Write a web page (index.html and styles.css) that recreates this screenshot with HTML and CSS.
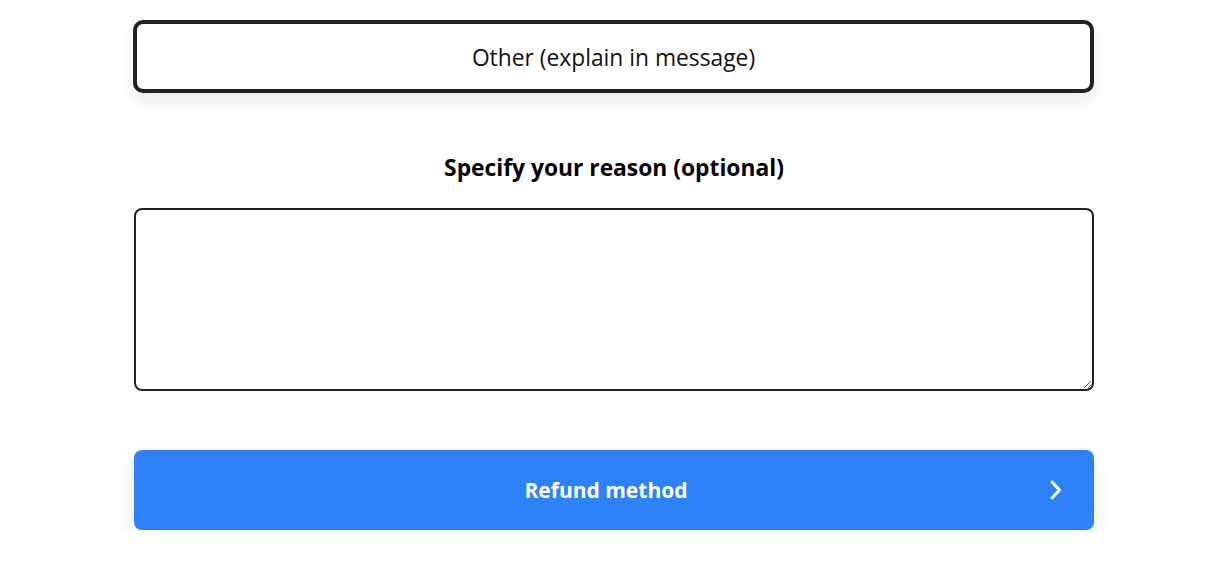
FILE: index.html
```html
<!DOCTYPE html>
<html lang="en">
<head>
<meta charset="utf-8">
<title>Refund reason</title>
<link rel="stylesheet" href="styles.css">
</head>
<body>
<main class="form">
  <div class="option">Other (explain in message)</div>
  <label class="label" for="reason">Specify your reason (optional)</label>
  <textarea class="reason" id="reason"></textarea>
  <button class="next" type="button">
    <span class="next-text">Refund method</span>
    <svg class="chevron" width="14" height="22" viewBox="0 0 14 22" aria-hidden="true"><path d="M3 3 L10.5 11 L3 19" fill="none" stroke="#fff" stroke-width="3" stroke-linecap="round" stroke-linejoin="round"/></svg>
  </button>
</main>
</body>
</html>
```
FILE: styles.css
```css
html, body {
  margin: 0;
  padding: 0;
  background: #fff;
}
body {
  font-family: "Open Sans", Lato, sans-serif;
  color: #111;
}
.form {
  width: 960px;
  margin: 0 auto;
  padding-top: 20px;
  display: flex;
  flex-direction: column;
}
.option {
  box-sizing: border-box;
  margin-left: -1px;
  width: 961px;
  height: 73px;
  border: 4px solid #222;
  border-radius: 10px;
  display: flex;
  align-items: center;
  justify-content: center;
  padding-top: 2px;
  font-size: 22.8px;
  color: #111;
  box-shadow: 0 8px 16px rgba(0, 0, 0, 0.08);
}
.label {
  margin-top: 60px;
  text-align: center;
  font-weight: 700;
  font-size: 22.8px;
  line-height: 30px;
  color: #000;
}
.reason {
  box-sizing: border-box;
  margin: 25px 0 0;
  width: 960px;
  height: 183px;
  border: 2px solid #222;
  border-radius: 8px;
  resize: vertical;
  font-family: inherit;
  font-size: 18px;
  padding: 10px;
  outline: none;
}
.next {
  box-sizing: border-box;
  margin-top: 59px;
  width: 960px;
  height: 80px;
  border: none;
  border-radius: 8px;
  background: #2c82f6;
  color: #fff;
  font-family: inherit;
  font-weight: 700;
  font-size: 21px;
  display: flex;
  align-items: center;
  justify-content: center;
  position: relative;
  box-shadow: 0 10px 20px rgba(0, 0, 0, 0.1);
  cursor: pointer;
}
.next-text {
  margin-left: -16px;
}
.chevron {
  position: absolute;
  right: 31px;
  top: 29px;
}
```
